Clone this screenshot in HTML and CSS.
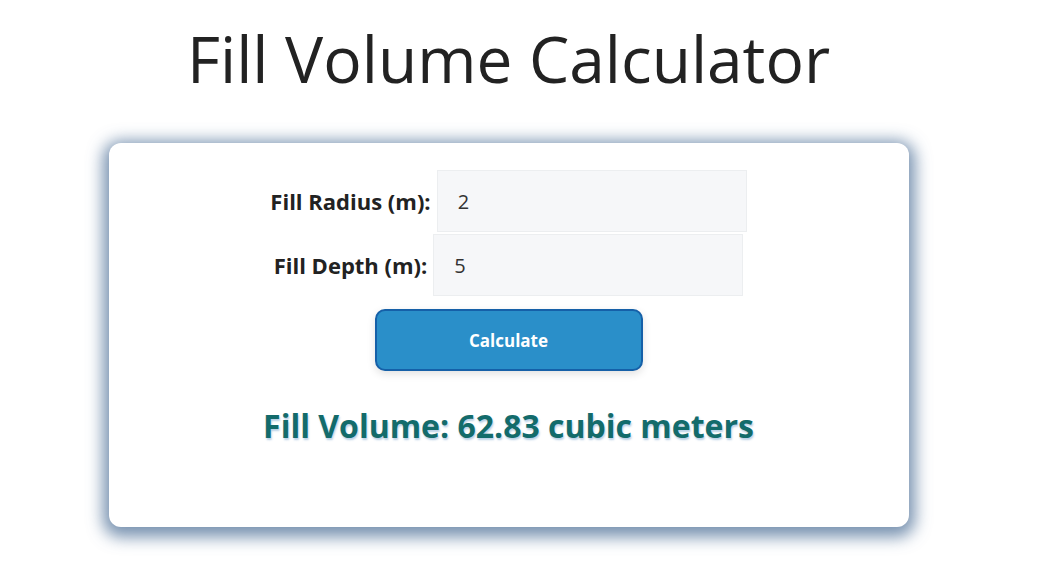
FILE: index.html
```html
<!DOCTYPE html>
<html lang="en">
<head>
    <meta charset="UTF-8">
    <title>Fill Volume Calculator</title>
    <link rel="stylesheet" href="styles.css">
</head>
<body>
    <h1 class="title">Fill Volume Calculator</h1>
    <div class="calculator">
        <div class="form-row">
            <label for="radius">Fill Radius (m):</label>
            <input type="text" id="radius" value="2">
        </div>
        <div class="form-row">
            <label for="depth">Fill Depth (m):</label>
            <input type="text" id="depth" value="5">
        </div>
        <div class="form-row">
            <button class="calc-btn">Calculate</button>
        </div>
        <div class="result">Fill Volume: 62.83 cubic meters</div>
    </div>
</body>
</html>
```

FILE: styles.css
```css
body {
    margin: 0;
    padding: 0 25px 0 0;
    background: #fff;
    font-family: "Open Sans", "Noto Sans", sans-serif;
    color: #222;
}

.title {
    margin: 14px 0 0;
    text-align: center;
    font-size: 64px;
    font-weight: 400;
    line-height: 90px;
    color: #222;
}

.calculator {
    width: 800px;
    height: 384px;
    box-sizing: border-box;
    margin: 39px auto 40px;
    padding: 27px 0 0;
    background: #fff;
    border-radius: 12px;
    box-shadow: 0 4px 16px 6px rgba(75, 110, 150, 0.75);
}

.form-row {
    display: flex;
    justify-content: center;
    align-items: center;
    gap: 6px;
    margin-bottom: 2px;
}

.form-row label {
    font-size: 22px;
    font-weight: 700;
    color: #222;
}

.form-row input {
    width: 310px;
    height: 62px;
    box-sizing: border-box;
    padding: 0 20px;
    border: 1px solid #eceef0;
    background: #f6f7f9;
    font-family: inherit;
    font-size: 20px;
    color: #333;
    outline: none;
}

.calc-btn {
    width: 268px;
    height: 62px;
    margin-top: 11px;
    background: #2a8fc9;
    border: 2px solid #1560a8;
    border-radius: 10px;
    color: #fff;
    font-family: inherit;
    font-size: 17px;
    font-weight: 700;
    box-shadow: 0 3px 8px rgba(0, 0, 0, 0.12);
}

.result {
    margin-top: 33px;
    text-align: center;
    font-size: 32px;
    font-weight: 700;
    color: #136b6b;
    text-shadow: 1px 2px 2px rgba(100, 150, 200, 0.45);
}
```
